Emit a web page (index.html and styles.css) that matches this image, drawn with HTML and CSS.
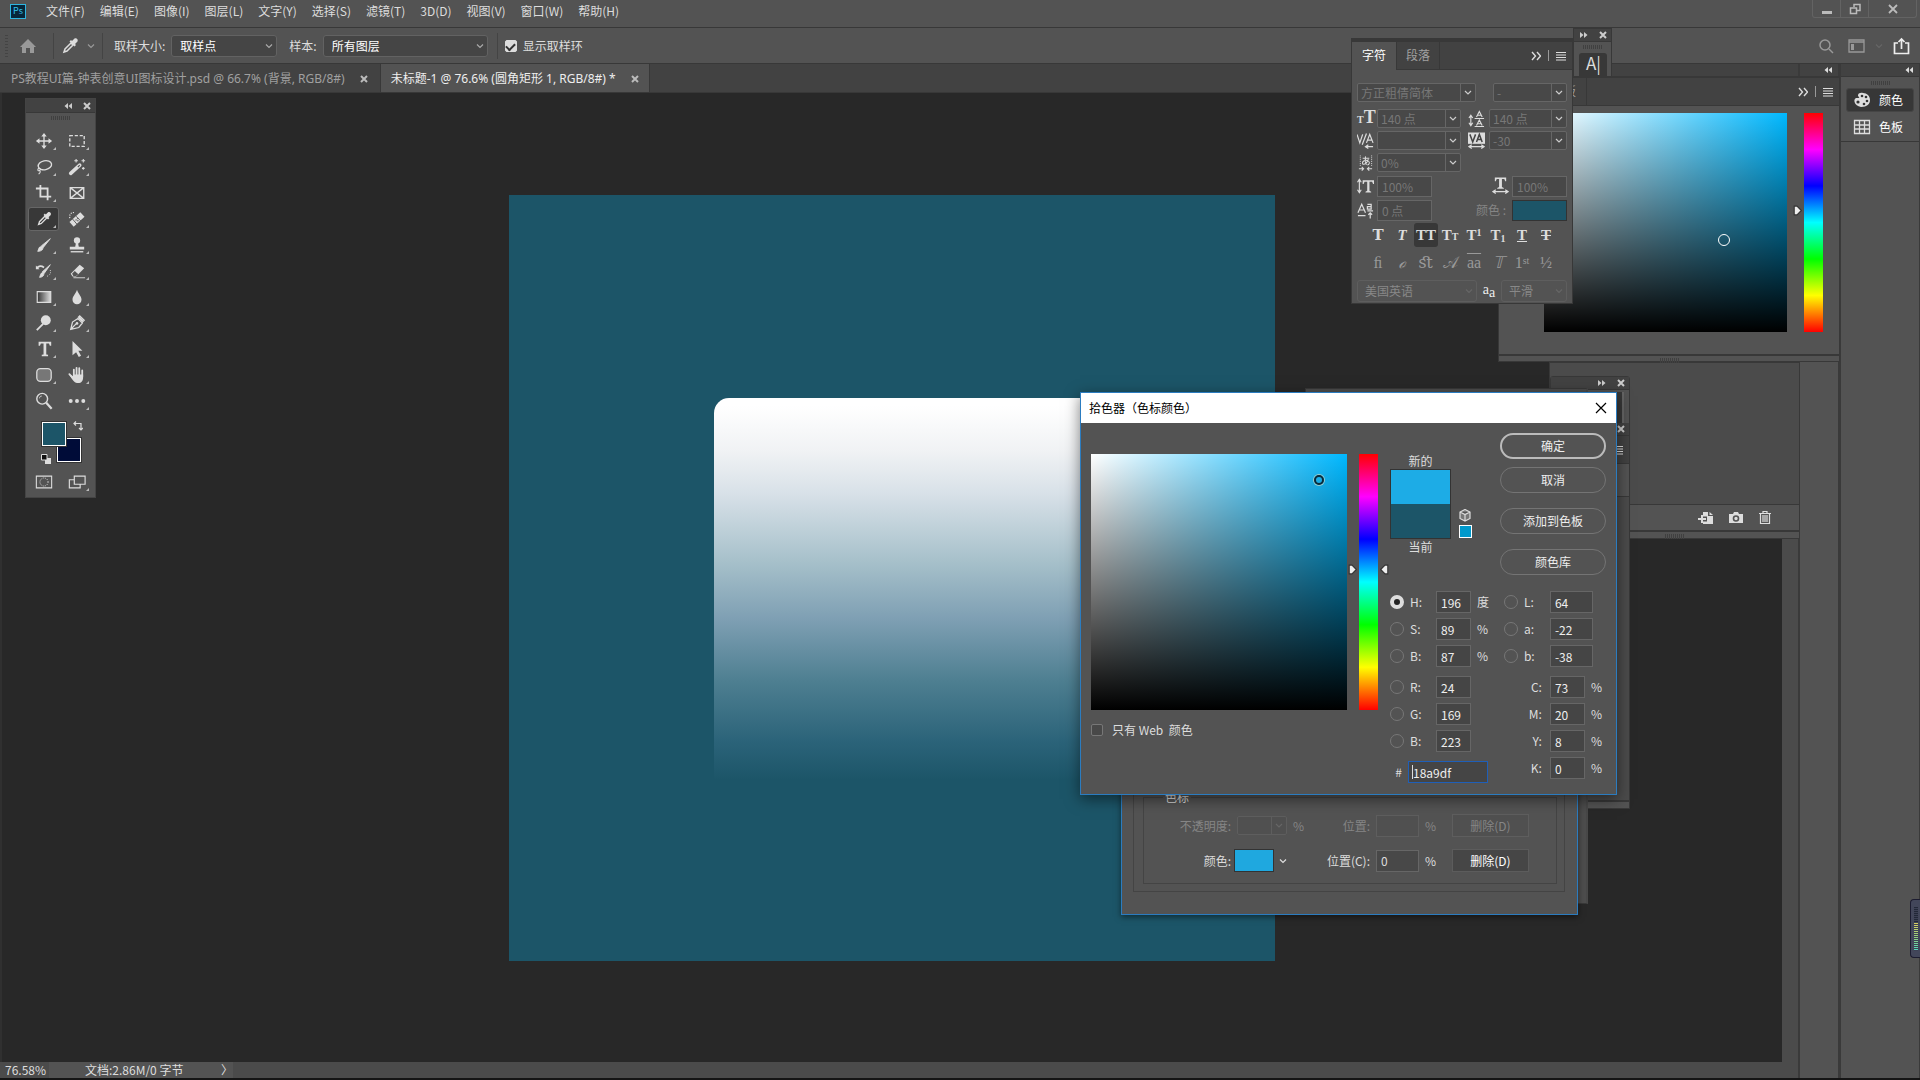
FILE: index.html
```html
<!DOCTYPE html>
<html lang="zh-CN">
<head>
    <meta charset="UTF-8">
    <meta name="viewport" content="width=device-width, initial-scale=1.0">
    <title>未标题-1</title>
    <link rel="stylesheet" href="styles.css">
</head>
<body>
    <!-- shared icons -->
    <svg class="sprite" aria-hidden="true">
        <symbol id="chevron" viewBox="0 0 8 8"><path d="M1 2.5l3 3 3-3" fill="none" stroke="currentColor" stroke-width="1.2"/></symbol>
        <symbol id="close" viewBox="0 0 8 8"><path d="M1 1l6 6M7 1L1 7" fill="none" stroke="currentColor" stroke-width="2"/></symbol>
        <symbol id="left2" viewBox="0 0 8 8"><path d="M4 1v6L0.500 4zM8 1v6L4.500 4z" fill="currentColor"/></symbol>
        <symbol id="right2" viewBox="0 0 8 8"><path d="M0 1v6l3.500-3zM4 1v6l3.500-3z" fill="currentColor"/></symbol>
        <symbol id="more" viewBox="0 0 10 10"><path d="M1 1l3.500 4L1 9M6 1l3.500 4L6 9" fill="none" stroke="currentColor" stroke-width="1.400"/></symbol>
        <symbol id="menu" viewBox="0 0 10 10"><path d="M0 1.500h10M0 4h10M0 6.500h10M0 9h10" fill="none" stroke="currentColor"/></symbol>
        <symbol id="dropper" viewBox="0 0 20 20"><path d="M4 16l1-3 6-6 2 2-6 6z" fill="none" stroke="currentColor" stroke-width="1.500"/><path d="M9.500 5.500L11 4l1 1 2.500-2.500c2-1 4 1 3 3L15 8l1 1-1.500 1.500z" fill="currentColor"/></symbol>
        <symbol id="pointer" viewBox="0 0 8 10"><path d="M1 1h2.500l4 4-4 4H1z" fill="#eee" stroke="#333"/></symbol>
    </svg>

    <div class="app">
        <header class="menubar">
            <span class="logo">Ps</span>
            <nav>
                <a href="#">文件(F)</a>
                <a href="#">编辑(E)</a>
                <a href="#">图像(I)</a>
                <a href="#">图层(L)</a>
                <a href="#">文字(Y)</a>
                <a href="#">选择(S)</a>
                <a href="#">滤镜(T)</a>
                <a href="#">3D(D)</a>
                <a href="#">视图(V)</a>
                <a href="#">窗口(W)</a>
                <a href="#">帮助(H)</a>
            </nav>
            <div class="win-buttons">
                <button aria-label="最小化"><svg width="12" height="12"><path d="M1 8h10v3H1z" fill="#bbb"/></svg></button>
                <button aria-label="还原"><svg width="12" height="12"><path d="M5 4V1.500h6v6H8M1.500 5h6v5.500h-6z" fill="none" stroke="#bbb" stroke-width="1.500"/></svg></button>
                <button aria-label="关闭" class="wide"><svg width="12" height="12"><path d="M2 2l8 8M10 2l-8 8" stroke="#bbb" stroke-width="1.800"/></svg></button>
            </div>
        </header>

        <div class="options">
            <span class="grip-v"></span>
            <button class="home" aria-label="主页"><svg width="18" height="16"><path d="M9 1l8 8h-2v6h-4v-5H7v5H3V9H1z" fill="#999"/></svg></button>
            <button class="tool-pick" aria-label="吸管工具"><svg width="20" height="20"><use href="#dropper"/></svg><svg width="8" height="8"><use href="#chevron"/></svg></button>
            <label for="sampleSize">取样大小:</label>
            <div class="select size">
                <select id="sampleSize"><option>取样点</option></select>
                <svg><use href="#chevron"/></svg>
            </div>
            <label for="sample">样本:</label>
            <div class="select layers">
                <select id="sample"><option>所有图层</option></select>
                <svg><use href="#chevron"/></svg>
            </div>
            <label class="ring"><input type="checkbox" class="check" checked>显示取样环</label>
            <div class="options-right">
                <svg width="16" height="16" class="search"><circle cx="7" cy="7" r="5" fill="none" stroke="#999" stroke-width="1.500"/><path d="M11 11l4 4" stroke="#999" stroke-width="1.500"/></svg>
                <svg width="17" height="14"><path d="M1 1h15v12H1zM1 3h15" fill="none" stroke="#999" stroke-width="1.300"/><path d="M3 5h3v6H3z" fill="#999"/></svg>
                <svg width="8" height="8" class="faint"><use href="#chevron"/></svg>
                <svg width="18" height="18"><path d="M5 6H1.500v10.500h14V6H12M8.500 12V2M5.500 5l3-3 3 3" fill="none" stroke="#eee" stroke-width="1.700"/></svg>
            </div>
        </div>

        <div class="work">
            <main>
                <div class="tabs">
                    <div class="tab"><a href="#">PS教程UI篇-钟表创意UI图标设计.psd @ 66.7% (背景, RGB/8#)</a><button aria-label="关闭"><svg width="8" height="8"><use href="#close"/></svg></button></div>
                    <div class="tab active"><a href="#">未标题-1 @ 76.6% (圆角矩形 1, RGB/8#) *</a><button aria-label="关闭"><svg width="8" height="8"><use href="#close"/></svg></button></div>
                </div>
                <div class="stage">
                    <div class="canvas"><div class="artboard"><div class="shape"></div></div></div>
                    <div class="scroll"></div>
                </div>
                <footer class="status">
                    <span class="zoom">76.58%</span>
                    <button class="doc"><span>文档:2.86M/0 字节</span><span>〉</span></button>
                </footer>
            </main>
            <aside class="strip">
                <div class="dock-head"><svg width="8" height="8"><use href="#left2"/></svg></div>
            </aside>
            <aside class="dock">
                <div class="dock-head"><svg width="8" height="8"><use href="#left2"/></svg></div>
                <div class="dock-group">
                    <span class="grip"></span>
                    <button class="on"><svg width="18" height="16"><path d="M10 1C5 0 4 4 6 5c1 1-1 1-3 1-3 1-2 8 5 9 6 0 9-3 9-7 0-4-3-7-7-7z" fill="#ddd"/><g fill="#333"><circle cx="9" cy="4" r="1.300"/><circle cx="13" cy="5" r="1.300"/><circle cx="14" cy="9" r="1.300"/><circle cx="11" cy="12" r="1.300"/><circle cx="5" cy="10" r="1.600"/></g></svg>颜色</button>
                    <button><svg width="18" height="16"><path d="M1.500 1.500h15v13h-15zM1.500 6h15M1.500 10h15M6.500 1v13M11.500 1v13" fill="none" stroke="#ddd" stroke-width="1.300"/></svg>色板</button>
                </div>
            </aside>
        </div>
        <div class="taskbar"></div>

        <!-- history panel -->
        <section class="float history">
            <div class="list"></div>
            <div class="foot">
                <button aria-label="新建文档"><svg width="15" height="12"><path d="M5 0h5v4h5v8H5V9.500h4v-5H5z" fill="#ddd"/><path d="M11.500 0L15 3h-3.500z" fill="#ddd"/><path d="M0 7h8M4 3v8" stroke="#ddd" stroke-width="2"/></svg></button>
                <button aria-label="新建快照"><svg width="14" height="12"><path d="M0 2h4l1-2h4l1 2h4v9H0z" fill="#ddd"/><circle cx="7" cy="6.500" r="2.500" fill="none" stroke="#535353" stroke-width="1.600"/></svg></button>
                <button aria-label="删除"><svg width="12" height="13"><path d="M0 2.500h12M4 2V.5h4V2M1.500 3v9.500h9V3M4 4v7M6 4v7M8 4v7" fill="none" stroke="#ddd" stroke-width="1.200"/></svg></button>
            </div>
            <div class="drag"><span class="grip"></span></div>
        </section>

        <!-- icon strips and windows left open behind the dialogs -->
        <section class="float small-top">
            <div class="float-head"><svg width="8" height="8"><use href="#right2"/></svg><svg width="8" height="8"><use href="#close"/></svg></div>
            <span class="grip"></span>
            <button class="a-button">A|</button>
        </section>
        <section class="float props">
            <div class="float-head"><svg width="8" height="8"><use href="#right2"/></svg><svg width="8" height="8"><use href="#close"/></svg></div>
            <div class="icon-row"></div>
            <div class="float-head"><svg width="8" height="8"><use href="#close"/></svg></div>
            <div class="props-tabs"><svg width="10" height="10"><use href="#menu"/></svg></div>
            <div class="props-bar"></div>
            <div class="props-body"></div>
        </section>
        <section class="float style-window"></section>

        <!-- color panel -->
        <section class="float color-panel">
            <div class="panel-tabs">
                <a href="#">色板</a>
                <div class="panel-tools"><svg width="10" height="10"><use href="#more"/></svg><i></i><svg width="10" height="10"><use href="#menu"/></svg></div>
            </div>
            <div class="color-body">
                <div class="field"><span class="marker"></span></div>
                <div class="hue-wrap">
                    <svg class="pointer"><use href="#pointer"/></svg>
                    <input type="range" class="hue" min="0" max="360" value="196" aria-label="色相">
                </div>
            </div>
            <div class="drag"><span class="grip"></span></div>
        </section>

        <!-- character panel -->
        <section class="float char-panel">
            <div class="panel-tabs">
                <a href="#" class="active">字符</a>
                <a href="#">段落</a>
                <div class="panel-tools"><svg width="10" height="10"><use href="#more"/></svg><i></i><svg width="10" height="10"><use href="#menu"/></svg></div>
            </div>
            <div class="char-body">
                <div class="char-row first">
                    <div class="combo font"><select aria-label="字体"><option>方正粗倩简体</option></select><svg><use href="#chevron"/></svg></div>
                    <div class="combo weight"><select aria-label="字体样式"><option>-</option></select><svg><use href="#chevron"/></svg></div>
                </div>
                <div class="char-row">
                    <span class="glyph"><small>T</small><b>T</b></span>
                    <div class="combo"><select aria-label="字体大小"><option>140 点</option></select><svg><use href="#chevron"/></svg></div>
                    <svg class="char-icon" viewBox="0 0 18 18"><path d="M3 6v9M1 8l2-3 2 3M1 13l2 3 2-3M7 8.500h10M7 17h10M9 7l3-6 3 6M10 5h4M9 16l3-6 3 6M10 14h4" fill="none" stroke="#ddd" stroke-width="1.200"/></svg>
                    <div class="combo right"><select aria-label="行距"><option>140 点</option></select><svg><use href="#chevron"/></svg></div>
                </div>
                <div class="char-row">
                    <svg class="char-icon" viewBox="0 0 18 18"><path d="M0 2l3 9 3-9M5.500 13L10 1M10 11l3.500-9 3.500 9M11 8h5M9 15h8M12 13l-3 2 3 2" fill="none" stroke="#ddd" stroke-width="1.300"/></svg>
                    <div class="combo"><select aria-label="字距微调"><option></option></select><svg><use href="#chevron"/></svg></div>
                    <svg class="char-icon" viewBox="0 0 18 18"><path d="M0 0h18v12H0z" fill="#ddd"/><path d="M2 2l3 8 3-8M9 10l3-8 3 8M10 7.500h4" fill="none" stroke="#444" stroke-width="1.600"/><path d="M1 15h16M4 13l-3 2 3 2M14 13l3 2-3 2" fill="none" stroke="#ddd" stroke-width="1.300"/></svg>
                    <div class="combo right"><select aria-label="字距"><option>-30</option></select><svg><use href="#chevron"/></svg></div>
                </div>
                <div class="char-row">
                    <svg class="char-icon" viewBox="0 0 18 18"><path d="M3.500 1v12M15.500 1v12" stroke="#ddd" stroke-dasharray="1 1"/><path d="M6 4h7M9 2c-1 4 0 7 1 9M12 5c-1 4-4 6-6 5-1-3 3-5 6-3 2 1 1 4-1 4M2 15h5M16 15h-5M5 13l2 2-2 2M13 13l-2 2 2 2" fill="none" stroke="#ddd" stroke-width="1.100"/></svg>
                    <div class="combo"><select aria-label="比例间距"><option>0%</option></select><svg><use href="#chevron"/></svg></div>
                </div>
                <div class="char-row tall">
                    <svg class="char-icon" viewBox="0 0 18 18"><path d="M2.500 3v12M.5 5l2-3 2 3M.5 13l2 3 2-3" fill="none" stroke="#ddd" stroke-width="1.200"/><path d="M6 3h12v4h-1l-1-2.500h-2.800v9.500l1.800 1v1H9v-1l1.800-1V4.500H8L7 7H6z" fill="#ddd"/></svg>
                    <input type="text" class="box" value="100%" aria-label="垂直缩放">
                    <svg class="char-icon push" viewBox="0 0 18 18"><path d="M3 0h12v4h-1l-1-2.500h-2.500v8.500l2 1v1H5.500v-1l2-1V1.500H5L4 4H3z" fill="#ddd"/><path d="M1 15h16M4 13l-3 2 3 2M14 13l3 2-3 2" fill="none" stroke="#ddd" stroke-width="1.300"/></svg>
                    <input type="text" class="box" value="100%" aria-label="水平缩放">
                </div>
                <div class="char-row tall">
                    <svg class="char-icon" viewBox="0 0 18 18"><path d="M1 12l4-9 4 9M3 9h5M1 15h8M11 3h4v5h-4V5.500h4M11 10h6M14 12v6M12 14l2-2 2 2" fill="none" stroke="#ddd" stroke-width="1.300"/></svg>
                    <input type="text" class="box" value="0 点" aria-label="基线偏移">
                    <span class="color-label">颜色 :</span>
                    <button class="box teal" aria-label="文本颜色"></button>
                </div>
                <div class="type-row">
                    <button><b>T</b></button>
                    <button><em>T</em></button>
                    <button class="on">TT</button>
                    <button>T<small>T</small></button>
                    <button>T<sup>1</sup></button>
                    <button>T<sub>1</sub></button>
                    <button><u>T</u></button>
                    <button><s>T</s></button>
                </div>
                <div class="type-row dim">
                    <button>ﬁ</button>
                    <button><em>ℴ</em></button>
                    <button>ﬆ</button>
                    <button>𝒜</button>
                    <button><span class="over">aa</span></button>
                    <button><em>𝕋</em></button>
                    <button>1<sup>st</sup></button>
                    <button>½</button>
                </div>
                <div class="char-row last">
                    <div class="select lang"><select aria-label="语言"><option>美国英语</option></select><svg><use href="#chevron"/></svg></div>
                    <span class="aa">a<sub>a</sub></span>
                    <div class="select smooth"><select aria-label="消除锯齿"><option>平滑</option></select><svg><use href="#chevron"/></svg></div>
                </div>
            </div>
        </section>

        <!-- toolbox -->
        <section class="float toolbox">
            <div class="float-head"><svg width="8" height="8"><use href="#left2"/></svg><svg width="8" height="8"><use href="#close"/></svg></div>
            <span class="grip"></span>
            <div class="tools">
                <button class="sub" aria-label="移动"><svg viewBox="0 0 20 20"><path d="M10 3v14M3 10h14" stroke="currentColor" stroke-width="1.500"/><path d="M10 1l3 4H7zM10 19l3-4H7zM1 10l4-3v6zM19 10l-4-3v6z" fill="currentColor"/></svg></button>
                <button class="sub" aria-label="矩形选框"><svg viewBox="0 0 20 20"><path d="M2 4h16v12H2z" fill="none" stroke="currentColor" stroke-width="1.500" stroke-dasharray="3.500 2"/></svg></button>
                <button class="sub" aria-label="套索"><svg viewBox="0 0 20 20"><ellipse cx="11" cy="8" rx="7.500" ry="5" transform="rotate(-12 11 8)" fill="none" stroke="currentColor" stroke-width="1.500"/><path d="M5 11c-3 1-2 4 0 3s1-3-1-2M5 14c2 1 0 3-1 4" fill="none" stroke="currentColor" stroke-width="1.200"/></svg></button>
                <button class="sub" aria-label="魔棒"><svg viewBox="0 0 20 20"><path d="M3 17l10-9" stroke="currentColor" stroke-width="4" stroke-linecap="round"/><path d="M9 1v4M7 3h4M17 1v4M15 3h4M17 10v3M15.500 11.500h3" stroke="currentColor" stroke-width="1.200"/><path d="M11 10l2-2" stroke="#535353" stroke-width="1.200"/></svg></button>
                <button class="sub" aria-label="裁剪"><svg viewBox="0 0 20 20"><path d="M1 5h13v13M6 1v13h12" fill="none" stroke="currentColor" stroke-width="2"/></svg></button>
                <button aria-label="图框"><svg viewBox="0 0 20 20"><path d="M2.500 4h15v12h-15zM2.500 4l15 12M17.500 4l-15 12" fill="none" stroke="currentColor" stroke-width="1.500"/></svg></button>
                <button class="sub on" aria-label="吸管"><svg><use href="#dropper"/></svg></button>
                <button class="sub" aria-label="修复画笔"><svg viewBox="0 0 20 20"><path d="M4 16L16 5" stroke="currentColor" stroke-width="7"/><path d="M5 10l6 7M9 7l6 6" stroke="#535353"/><g fill="#535353"><circle cx="9" cy="11" r=".8"/><circle cx="11" cy="9.500" r=".8"/><circle cx="11" cy="12" r=".8"/></g><path d="M2 9c-1-4 2-7 6-6" fill="none" stroke="currentColor" stroke-width="1.300" stroke-dasharray="1.300 1.300"/></svg></button>
                <button class="sub" aria-label="画笔"><svg viewBox="0 0 20 20"><path d="M17 3l-8 10-2-2zM8 12c2 2 0 5-5 5 1-1 1-5 3-5z" fill="currentColor" stroke="currentColor"/></svg></button>
                <button class="sub" aria-label="仿制图章"><svg viewBox="0 0 20 20"><circle cx="10" cy="5" r="3.500" fill="currentColor"/><path d="M9 7h2l1 5h6v3H2v-3h6z" fill="currentColor"/><path d="M3 17.500h14" stroke="currentColor" stroke-width="1.500"/></svg></button>
                <button class="sub" aria-label="历史记录画笔"><svg viewBox="0 0 20 20"><path d="M17 3l-7 10-2-2zM9 12c2 2 0 5-4 5 1-1 1-5 3-5z" fill="currentColor" stroke="currentColor"/><path d="M2 7c2-3 5-3 8-1" fill="none" stroke="currentColor" stroke-width="2"/><path d="M1 4v4h4z" fill="currentColor"/><path d="M17 9c1 4-1 6-4 7" fill="none" stroke="currentColor" stroke-dasharray="1 1.500"/></svg></button>
                <button class="sub" aria-label="橡皮擦"><svg viewBox="0 0 20 20"><path d="M3 13L13 3l5 4-9 9H5z" fill="currentColor"/><path d="M4.500 13l3-3 4 3.500-2.500 2H6z" fill="#535353"/><path d="M6 17.500h13" stroke="currentColor"/></svg></button>
                <button class="sub" aria-label="渐变"><svg viewBox="0 0 20 20"><defs><linearGradient id="fade"><stop stop-color="#333"/><stop offset="1" stop-color="#ddd"/></linearGradient></defs><path d="M2.500 4h15v12h-15z" fill="url(#fade)" stroke="currentColor" stroke-width="1.300"/></svg></button>
                <button class="sub" aria-label="模糊"><svg viewBox="0 0 20 20"><path d="M10 2c1 4 5 7 5 11a5 5 0 0 1-10 0c0-4 4-7 5-11z" fill="currentColor"/></svg></button>
                <button class="sub" aria-label="减淡"><svg viewBox="0 0 20 20"><circle cx="12" cy="7" r="5.500" fill="currentColor"/><path d="M9 11l-7 7" stroke="currentColor" stroke-width="2"/></svg></button>
                <button class="sub" aria-label="钢笔"><svg viewBox="0 0 20 20"><path d="M3 17l2-8 6-4 5 5-4 5zM3 17l6-6M11 4l2-2 5 5-2 2" fill="none" stroke="currentColor" stroke-width="1.400"/><circle cx="10" cy="10.500" r="1.500" fill="currentColor"/><path d="M12 3.500l4.500 4.500" stroke="currentColor" stroke-width="2.500"/></svg></button>
                <button class="sub" aria-label="文字"><svg viewBox="0 0 20 20"><path d="M4 2h14v4.500h-1.500L15.500 4H12.500v12l2 .5V18h-7v-1.500l2-.5V4h-3L5.500 6.500H4z" fill="currentColor"/></svg></button>
                <button class="sub" aria-label="路径选择"><svg viewBox="0 0 20 20"><path d="M5 1l11 11h-4.500l3 5.500-2.500 1.500-3-5.500L5 17z" fill="currentColor"/></svg></button>
                <button class="sub" aria-label="圆角矩形"><svg viewBox="0 0 20 20"><rect x="2" y="3" width="16" height="14" rx="4" fill="#777" stroke="currentColor" stroke-width="1.400"/></svg></button>
                <button class="sub" aria-label="抓手"><svg viewBox="0 0 20 20"><path d="M6.500 12V4M9.500 11V2M12.500 11V2.500M15.800 12V5M5 13l-3.500-4" stroke="currentColor" stroke-width="2" stroke-linecap="round"/><path d="M5.500 9.500h11.300v3c0 4-2 6.500-5.300 6.500-4 0-5.500-2-9.500-8.500 1-1 2 0 3.500 1z" fill="currentColor"/></svg></button>
                <button aria-label="缩放"><svg viewBox="0 0 20 20"><circle cx="8" cy="7.500" r="6" fill="none" stroke="currentColor" stroke-width="1.600"/><path d="M12.500 12l6 6.500" stroke="currentColor" stroke-width="2.500"/><path d="M5 7c0-1.500 1-2.500 2.500-2.500" fill="none" stroke="currentColor"/></svg></button>
                <button class="sub" aria-label="编辑工具栏"><svg viewBox="0 0 20 20"><g fill="currentColor"><circle cx="3" cy="10" r="2.200"/><circle cx="10" cy="10" r="2.200"/><circle cx="17" cy="10" r="2.200"/></g></svg></button>
            </div>
            <div class="swatches">
                <button class="bg" aria-label="背景色"></button>
                <button class="fg" aria-label="前景色"></button>
                <svg class="swap" viewBox="0 0 10 10"><path d="M1 2.500h7V9M3 0.500l-2 2 2 2M6 7l2 2 2-2" fill="none" stroke="#ddd" stroke-width="1.200"/></svg>
                <svg class="default" viewBox="0 0 10 10"><path d="M4 4h6v6H4z" fill="#ddd"/><path d="M.5.5h5.500v5.500H.5z" fill="#111" stroke="#ddd"/></svg>
            </div>
            <div class="tools">
                <button aria-label="快速蒙版"><svg viewBox="0 0 20 20"><path d="M1.500 3.500h17v13h-17z" fill="none" stroke="currentColor" stroke-width="1.200"/><circle cx="10" cy="10" r="4.500" fill="none" stroke="currentColor" stroke-dasharray="1.200 1.200"/></svg></button>
                <button class="sub" aria-label="屏幕模式"><svg viewBox="0 0 20 20"><path d="M7 3.500h12v9H7zM7 7.500H1.500v9h12v-4" fill="none" stroke="currentColor" stroke-width="1.300"/></svg></button>
            </div>
        </section>

        <!-- gradient editor -->
        <section class="float editor">
            <div class="editor-frame">
                <fieldset>
                    <legend>色标</legend>
                    <div class="stops">
                        <label class="off" for="opacity">不透明度:</label>
                        <div class="combo off"><input type="text" id="opacity" disabled><svg><use href="#chevron"/></svg></div>
                        <span class="off">%</span>
                        <label class="off" for="pos1">位置:</label>
                        <input type="text" id="pos1" class="off" disabled>
                        <span class="off">%</span>
                        <button class="off" disabled>删除(D)</button>

                        <label for="stopColor">颜色:</label>
                        <div class="stop-color"><button id="stopColor" aria-label="颜色"></button><svg width="8" height="8"><use href="#chevron"/></svg></div>
                        <span></span>
                        <label for="pos2">位置(C):</label>
                        <input type="text" id="pos2" value="0">
                        <span>%</span>
                        <button>删除(D)</button>
                    </div>
                </fieldset>
            </div>
        </section>

        <!-- color picker -->
        <section class="float picker">
            <header>
                <h1>拾色器（色标颜色）</h1>
                <button aria-label="关闭"><svg width="12" height="12"><path d="M1 1l10 10M11 1L1 11" stroke="#000" stroke-width="1.200"/></svg></button>
            </header>
            <div class="picker-body">
                <div class="picker-left">
                    <div class="field"><span class="marker dark"></span></div>
                    <label class="web"><input type="checkbox" class="check">只有 Web&nbsp; 颜色</label>
                </div>
                <div class="hue-wrap">
                    <svg class="pointer"><use href="#pointer"/></svg>
                    <input type="range" class="hue" min="0" max="360" value="196" aria-label="色相">
                    <svg class="pointer flip"><use href="#pointer"/></svg>
                </div>
                <div class="picker-right">
                    <div class="picker-top">
                        <div class="compare">
                            <span>新的</span>
                            <div class="chips"><i></i><i></i></div>
                            <span>当前</span>
                        </div>
                        <div class="websafe">
                            <svg width="12" height="13"><path d="M6 .5l5 2.500v6.500L6 12 1 9.500V3zM1 3l5 2.500L11 3M6 5.500V12" fill="#777" stroke="#ddd" stroke-width="1.200"/></svg>
                            <button aria-label="Web 安全颜色"></button>
                        </div>
                        <div class="actions">
                            <button class="primary">确定</button>
                            <button>取消</button>
                            <button class="spaced">添加到色板</button>
                            <button class="spaced">颜色库</button>
                        </div>
                    </div>
                    <div class="values">
                        <div class="group">
                            <div class="row"><input type="radio" name="mode" id="mH" checked><label for="mH">H:</label><input type="text" value="196" aria-label="H"><span>度</span></div>
                            <div class="row"><input type="radio" name="mode" id="mS"><label for="mS">S:</label><input type="text" value="89" aria-label="S"><span>%</span></div>
                            <div class="row"><input type="radio" name="mode" id="mB"><label for="mB">B:</label><input type="text" value="87" aria-label="B"><span>%</span></div>
                            <div class="row split"><input type="radio" name="mode" id="mR"><label for="mR">R:</label><input type="text" value="24" aria-label="R"></div>
                            <div class="row"><input type="radio" name="mode" id="mG"><label for="mG">G:</label><input type="text" value="169" aria-label="G"></div>
                            <div class="row"><input type="radio" name="mode" id="mBl"><label for="mBl">B:</label><input type="text" value="223" aria-label="B"></div>
                            <div class="row split hex"><label for="hex">#</label><input type="text" id="hex" value="18a9df"></div>
                        </div>
                        <div class="group">
                            <div class="row lab"><input type="radio" name="mode" id="mL"><label for="mL">L:</label><input type="text" value="64" aria-label="L"></div>
                            <div class="row lab"><input type="radio" name="mode" id="mA"><label for="mA">a:</label><input type="text" value="-22" aria-label="a"></div>
                            <div class="row lab"><input type="radio" name="mode" id="mLb"><label for="mLb">b:</label><input type="text" value="-38" aria-label="b"></div>
                            <div class="row split cmyk"><label for="cC">C:</label><input type="text" id="cC" value="73"><span>%</span></div>
                            <div class="row cmyk"><label for="cM">M:</label><input type="text" id="cM" value="20"><span>%</span></div>
                            <div class="row cmyk"><label for="cY">Y:</label><input type="text" id="cY" value="8"><span>%</span></div>
                            <div class="row cmyk"><label for="cK">K:</label><input type="text" id="cK" value="0"><span>%</span></div>
                        </div>
                    </div>
                </div>
            </div>
        </section>

        <div class="meter"><i></i></div>
    </div>
</body>
</html>
```
FILE: styles.css
```css
* {
    box-sizing: border-box;
}

body {
    margin: 0;
    font-family: "Noto Sans CJK SC", "Noto Sans", sans-serif;
    font-size: 12px;
    line-height: 16px;
    color: #ddd;
    background: #282828;
}

button, input, select {
    font: inherit;
    color: inherit;
    background: none;
    border: 0;
    margin: 0;
    padding: 0;
}

a {
    color: inherit;
    text-decoration: none;
    white-space: nowrap;
}

svg {
    display: block;
    flex: none;
}

.sprite {
    position: absolute;
    width: 0;
    height: 0;
}

.app {
    position: relative;
    display: flex;
    flex-direction: column;
    height: 100vh;
    overflow: hidden;
}

/* top bars */
.menubar {
    display: flex;
    align-items: center;
    height: 28px;
    padding-left: 10px;
    padding-bottom: 5px;
    background: #535353;
    border-bottom: 1px solid #383838;
}

.logo {
    width: 16px;
    height: 15px;
    margin-right: 20px;
    border: 1px solid #2fb5e0;
    background: #06263a;
    color: #35c3ee;
    font-size: 9px;
    line-height: 12px;
    text-align: center;
}

.menubar nav {
    display: flex;
    gap: 15px;
    flex: 1;
}

.win-buttons {
    display: flex;
    align-self: flex-start;
    height: 18px;
    margin-right: 3px;
    border: 1px solid #636363;
    border-top: 0;
    border-radius: 0 0 3px 3px;
}

.win-buttons button {
    display: flex;
    align-items: center;
    justify-content: center;
    width: 28px;
    border-right: 1px solid #636363;
}

.win-buttons .wide {
    width: 47px;
    border: 0;
}

.options {
    display: flex;
    align-items: center;
    height: 36px;
    padding-left: 5px;
    background: #535353;
    border-bottom: 1px solid #383838;
}

.grip-v {
    width: 3px;
    height: 22px;
    background: repeating-linear-gradient(#444 0 1px, transparent 1px 3px);
}

.home {
    width: 46px;
    height: 26px;
    padding-left: 11px;
    border-right: 1px solid #444;
}

.tool-pick {
    display: flex;
    align-items: center;
    gap: 7px;
    width: 49px;
    height: 26px;
    margin-right: 11px;
    padding-left: 6px;
    border-right: 1px solid #444;
}

.tool-pick svg + svg {
    color: #999;
}

.select {
    display: grid;
    align-items: center;
    height: 22px;
    margin: 0 12px 0 6px;
    border: 1px solid #626262;
    border-radius: 3px;
    background: #454545;
}

.select select, .select svg {
    grid-area: 1 / 1;
}

.select select {
    appearance: none;
    width: 100%;
    padding-left: 8px;
    color: #fff;
}

.select svg {
    justify-self: end;
    width: 8px;
    height: 8px;
    margin-right: 3px;
    color: #aaa;
    pointer-events: none;
}

.size {
    width: 106px;
}

.layers {
    width: 165px;
    margin-right: 9px;
}

.ring {
    display: flex;
    align-items: center;
    gap: 6px;
    height: 26px;
    padding-left: 7px;
    border-left: 1px solid #444;
}

.check {
    appearance: none;
    width: 12px;
    height: 12px;
    border: 1px solid #777;
    border-radius: 2px;
    background: #484848;
}

.check:checked {
    display: grid;
    place-items: center;
    border-color: #ddd;
    background: #ddd;
}

.check:checked::after {
    content: "";
    width: 7px;
    height: 4px;
    border: solid #333;
    border-width: 0 0 2px 2px;
    transform: rotate(-45deg);
}

.options-right {
    display: flex;
    align-items: center;
    gap: 10px;
    margin-left: auto;
    padding-right: 9px;
}

.search {
    margin-right: 4px;
}

.faint {
    color: #666;
}

/* work area */
.work {
    display: flex;
    flex: 1;
    min-height: 0;
}

main {
    display: flex;
    flex-direction: column;
    flex: 1;
    min-width: 0;
    border-right: 2px solid #3a3a3a;
}

.tabs {
    display: flex;
    height: 29px;
    background: #424242;
    border-bottom: 1px solid #383838;
    font-family: "Noto Sans", "Noto Sans CJK SC", sans-serif;
}

.tab {
    display: flex;
    align-items: center;
    gap: 15px;
    padding: 1px 12px 0 11px;
    border-right: 1px solid #383838;
    color: #a0a0a0;
}

.tab.active {
    padding: 1px 10px 0;
    background: #535353;
    color: #eee;
}

.tab button {
    color: #bbb;
}

.stage {
    display: flex;
    flex: 1;
    min-height: 0;
}

.canvas {
    display: flex;
    align-items: center;
    justify-content: center;
    flex: 1;
    overflow: hidden;
    border-left: 2px solid #303030;
}

.artboard {
    flex: none;
    width: 766px;
    height: 766px;
    padding: 203px 0 0 205px;
    background: #1c5568;
}

.shape {
    width: 420px;
    height: 382px;
    border-radius: 15px 15px 0 0;
    background: linear-gradient(#fff 2%, #f0f2f4 14%, #d8e1e8 25%, #a6c0ca 43%, #7e9fb3 58%, #4e7f91 74%, #2b6379 90%, #1c5568);
}

.scroll {
    width: 16px;
    background: #4b4b4b;
}

.status {
    display: flex;
    height: 16px;
    background: #4b4b4b;
}

.zoom {
    width: 49px;
    padding-left: 5px;
}

.doc {
    display: flex;
    justify-content: space-between;
    width: 184px;
    padding-left: 36px;
    background: #535353;
}

.taskbar {
    height: 2px;
    background: #151515;
}

.strip {
    width: 41px;
    background: #535353;
    border-right: 3px solid #3a3a3a;
}

.dock {
    width: 79px;
    background: #535353;
    border-right: 1px solid #3a3a3a;
}

.dock-head {
    display: flex;
    align-items: center;
    justify-content: flex-end;
    height: 12px;
    padding-right: 6px;
    background: #424242;
}

.dock-group {
    padding: 4px 5px 2px;
    border-top: 1px solid #383838;
    border-bottom: 1px solid #383838;
}

.grip {
    display: block;
    width: 19px;
    height: 4px;
    margin: 0 auto;
    background: repeating-linear-gradient(90deg, #404040 0 1px, transparent 1px 2px);
}

.dock-group button {
    display: flex;
    align-items: center;
    gap: 8px;
    width: 100%;
    height: 24px;
    margin-top: 3px;
    padding-left: 6px;
    border: 1px solid transparent;
    border-radius: 3px;
    color: #fff;
}

.dock-group .on {
    border-color: #454545;
    background: #373737;
}

/* floating windows */
.float {
    position: absolute;
    background: #535353;
    border: 1px solid #383838;
}

.float-head {
    display: flex;
    align-items: center;
    justify-content: flex-end;
    gap: 11px;
    height: 13px;
    padding-right: 4px;
    background: #424242;
    border-bottom: 1px solid #383838;
    color: #ccc;
}

.drag {
    height: 8px;
    padding-top: 2px;
    border-top: 2px solid #383838;
}

.drag .grip {
    height: 5px;
}

.panel-tabs {
    display: flex;
    height: 28px;
    background: #424242;
    border-bottom: 1px solid #383838;
    line-height: 26px;
}

.panel-tabs a {
    padding: 0 9px;
    border-right: 1px solid #383838;
    color: #a0a0a0;
}

.panel-tabs .active {
    padding: 0 10px;
    background: #535353;
    height: 28px;
    color: #fff;
}

.panel-tools {
    display: flex;
    align-items: center;
    gap: 7px;
    margin-left: auto;
    padding-right: 6px;
}

.panel-tools i {
    width: 1px;
    height: 11px;
    background: #999;
}

.history {
    top: 362px;
    right: 120px;
    width: 251px;
    height: 177px;
    display: flex;
    flex-direction: column;
}

.history .list {
    flex: 1;
    background: #4b4b4b;
    border-bottom: 1px solid #383838;
}

.history .foot {
    display: flex;
    align-items: center;
    justify-content: flex-end;
    gap: 16px;
    height: 25px;
    padding-right: 28px;
}

.small-top {
    top: 28px;
    left: 1573px;
    width: 39px;
    height: 50px;
}

.small-top .grip {
    margin-top: 3px;
}

.a-button {
    display: block;
    width: 28px;
    height: 24px;
    margin: 4px auto 0;
    border-radius: 3px 3px 0 0;
    background: #383838;
    font-size: 17px;
    line-height: 20px;
    padding: 0 0 4px 2px;
}

.props {
    top: 376px;
    left: 1550px;
    width: 80px;
    height: 433px;
    display: flex;
    flex-direction: column;
    border-radius: 3px 3px 0 0;
}

.icon-row {
    height: 31px;
    margin: 2px 5px 0 0;
    border-right: 2px solid #666;
    background: #383838;
}

.props-tabs {
    display: flex;
    align-items: center;
    justify-content: flex-end;
    height: 28px;
    padding-right: 6px;
    background: #424242;
    border-bottom: 1px solid #383838;
}

.props-bar {
    height: 33px;
    border-bottom: 1px solid #383838;
}

.props-body {
    flex: 1;
    margin-bottom: 6px;
    background: #4b4b4b;
    border-bottom: 2px solid #383838;
}

.style-window {
    top: 388px;
    left: 1305px;
    width: 283px;
    height: 516px;
    background: #4d4d4d;
    border-right: 2px solid #484848;
}

.color-panel {
    top: 76px;
    left: 1498px;
    width: 342px;
    height: 286px;
    border-top-width: 2px;
}

.color-panel .panel-tabs a {
    padding: 0 10px 0 53px;
}

.color-body {
    display: flex;
    gap: 17px;
    height: 248px;
    padding: 7px 16px 0 45px;
}

.field {
    position: relative;
    height: 256px;
    background: linear-gradient(to top, #000, transparent), linear-gradient(to right, #fff, #00b8ff);
}

.color-body .field {
    flex: 1;
    height: 219px;
}

.marker {
    position: absolute;
    left: 74%;
    top: 58%;
    width: 12px;
    height: 12px;
    transform: translate(-50%, -50%);
    border: 1px solid #fff;
    border-radius: 50%;
}

.marker.dark {
    left: 89%;
    top: 10%;
    width: 10px;
    height: 10px;
    border: 2px solid #0a2a3a;
    box-shadow: 0 0 0 1px #9cc;
}

.hue-wrap {
    position: relative;
    flex: none;
    width: 19px;
    height: 219px;
}

.hue {
    display: block;
    appearance: none;
    writing-mode: vertical-lr;
    direction: rtl;
    width: 100%;
    height: 100%;
    background: linear-gradient(#f00, #f0f 16.7%, #00f 33.3%, #0ff 50%, #0f0 66.7%, #ff0 83.3%, #f00);
}

.hue::-webkit-slider-thumb {
    appearance: none;
    width: 1px;
    height: 1px;
}

.pointer {
    position: absolute;
    top: 43%;
    left: -11px;
    width: 9px;
    height: 11px;
}

.color-body .pointer {
    top: 42%;
}

.pointer.flip {
    left: auto;
    right: -11px;
    transform: scaleX(-1);
}

/* character panel */
.char-panel {
    top: 38px;
    left: 1351px;
    width: 222px;
    border-top-width: 4px;
}

.char-body {
    padding: 13px 5px 1px;
    color: #858585;
}

.char-row {
    display: flex;
    align-items: center;
    height: 19px;
    margin-bottom: 3px;
}

.char-row.first {
    justify-content: space-between;
    margin-bottom: 7px;
}

.char-row.tall {
    height: 22px;
    margin-bottom: 2px;
}

.char-icon {
    width: 17px;
    height: 18px;
    margin-right: 3px;
}

.glyph {
    width: 20px;
    font-family: "Liberation Serif", serif;
    color: #ddd;
    white-space: nowrap;
}

.glyph small {
    font-size: 10px;
    font-weight: bold;
}

.glyph b {
    font-size: 18px;
}

.combo {
    display: flex;
    align-items: center;
    width: 84px;
    height: 19px;
    border: 1px solid #666;
    border-radius: 2px;
    background: #484848;
}

.combo select, .combo input {
    appearance: none;
    flex: 1;
    min-width: 0;
    padding-left: 3px;
    color: #777;
}

.combo svg {
    width: 15px;
    height: 17px;
    padding: 4px 3px;
    border-left: 1px solid #666;
    color: #ccc;
}

.char-row .combo + .char-icon {
    margin-left: 7px;
}

.combo.font {
    width: 119px;
}

.combo.weight {
    width: 74px;
}

.combo.right {
    width: 78px;
    margin-left: auto;
}

.box {
    width: 55px;
    height: 21px;
    padding-left: 4px;
    border: 1px solid #666;
    background: #484848;
    color: #777;
}

.char-row .char-icon.push {
    margin-left: auto;
}

.color-label {
    margin-left: auto;
    margin-right: 6px;
}

.box.teal {
    background: #1c5568;
    border-color: #333;
}

.type-row {
    display: grid;
    grid-template-columns: repeat(8, 24px);
    justify-content: center;
    height: 26px;
    margin-top: 2px;
    font-family: "Liberation Serif", "DejaVu Serif", serif;
    font-size: 15px;
    font-weight: bold;
    color: #ddd;
}

.type-row button {
    height: 24px;
    white-space: nowrap;
    line-height: 22px;
}

.type-row .on {
    border-radius: 3px;
    background: #383838;
}

.type-row small, .type-row sup, .type-row sub {
    font-size: 10px;
    line-height: 0;
}

.type-row sup {
    vertical-align: 4px;
}

.type-row sub {
    vertical-align: -2px;
}

.type-row b {
    font-family: "DejaVu Serif", serif;
}

.type-row.dim {
    color: #999;
    font-weight: normal;
    font-size: 16px;
}

.over {
    text-decoration: overline;
}

.char-row.last {
    height: 22px;
    margin: 3px 0 0;
}

.char-row .select {
    margin: 0;
    background: none;
    border-color: #5e5e5e;
}

.char-row .select select {
    padding-left: 7px;
    color: #888;
}

.char-row .select svg {
    color: #666;
}

.lang {
    width: 120px;
}

.smooth {
    width: 66px;
}

.aa {
    flex: 1;
    padding-bottom: 3px;
    text-align: center;
    font-family: "Liberation Serif", serif;
    font-size: 14px;
    color: #eee;
}

.aa sub {
    font-size: 14px;
    line-height: 0;
    vertical-align: -3px;
}

/* toolbox */
.toolbox {
    top: 98px;
    left: 25px;
    width: 71px;
    padding-bottom: 3px;
    border-color: #444;
}

.toolbox .float-head {
    height: 14px;
}

.toolbox > .grip {
    margin: 3px auto 9px;
}

.tools {
    display: grid;
    grid-template-columns: 31px 31px;
    gap: 2px;
    padding-left: 2px;
}

.tools button {
    position: relative;
    display: flex;
    align-items: center;
    justify-content: center;
    height: 24px;
    border: 1px solid transparent;
    border-radius: 3px;
}

.tools svg {
    width: 18px;
    height: 18px;
}

.tools .on {
    border-color: #666;
    background: #383838;
}

.sub::after {
    content: "";
    position: absolute;
    right: 2px;
    bottom: 2px;
    border: solid transparent;
    border-width: 0 0 3px 3px;
    border-bottom-color: #bbb;
}

.swatches {
    position: relative;
    height: 57px;
}

.swatches button {
    position: absolute;
    width: 24px;
    height: 24px;
    border: 1px solid #fff;
    outline: 1px solid #333;
}

.swatches .fg {
    top: 9px;
    left: 16px;
    background: #1c5568;
}

.swatches .bg {
    top: 25px;
    left: 31px;
    background: #000c38;
}

.swap, .default {
    position: absolute;
    width: 10px;
    height: 10px;
}

.swap {
    top: 8px;
    left: 47px;
}

.default {
    top: 41px;
    left: 15px;
}

/* gradient editor */
.editor {
    top: 700px;
    left: 1121px;
    width: 457px;
    height: 215px;
    padding: 0 12px 22px 11px;
    border-color: #2b7cc0;
    box-shadow: 0 2px 6px rgba(0, 0, 0, 0.5);
}

.editor-frame {
    height: 100%;
    padding: 88px 7px 8px 9px;
    border: 1px solid #444;
    border-top: 0;
}

.editor fieldset {
    height: 95px;
    margin: 0;
    padding: 9px 0 0 31px;
    border: 1px solid #444;
}

.editor legend {
    margin-left: -12px;
    padding: 0 2px;
}

.stops {
    display: grid;
    grid-template-columns: 56px 50px 12px 59px 43px 21px 77px;
    align-items: center;
    gap: 12px 6px;
}

.stops label {
    text-align: right;
}

.stops > input {
    width: 43px;
    height: 22px;
    padding-left: 4px;
    border: 1px solid #666;
    background: #484848;
}

.stops > button {
    height: 23px;
    border: 1px solid #5c5c5c;
    background: #464646;
    color: #fff;
}

.stops > .off {
    color: #858585;
}

.stops > input.off, .stops > .combo.off, .stops > button.off {
    border-color: #5e5e5e;
    background: #505050;
}

.stops .combo svg {
    border-color: #5e5e5e;
    color: #666;
}

.stops .combo {
    width: 50px;
}

.stop-color {
    display: flex;
    align-items: center;
    gap: 5px;
    margin-left: -3px;
}

.stop-color button {
    width: 44px;
    height: 23px;
    border: 1px solid #333;
    background: #1fa8df;
}

/* color picker */
.picker {
    top: 392px;
    left: 1080px;
    width: 537px;
    height: 403px;
    border-color: #2b7cc0;
    box-shadow: 0 4px 14px rgba(0, 0, 0, 0.5);
}

.picker header {
    display: flex;
    align-items: center;
    justify-content: space-between;
    height: 30px;
    padding: 0 9px 1px 8px;
    background: #fff;
    color: #000;
}

.picker h1 {
    margin: 0;
    font-size: 12px;
    font-weight: normal;
}

.picker-body {
    display: flex;
    padding: 10px 10px 0 10px;
}

.picker-left {
    width: 256px;
    margin: 21px 12px 0 0;
}

.web {
    display: flex;
    align-items: center;
    gap: 9px;
    margin-top: 12px;
}

.picker .hue-wrap {
    height: 256px;
    margin-top: 21px;
}

.picker-right {
    flex: 1;
    margin-left: 12px;
}

.picker-top {
    display: flex;
    height: 158px;
}

.compare {
    width: 61px;
    margin-top: 20px;
    text-align: center;
}

.chips {
    height: 70px;
    border: 1px solid #333;
}

.chips i {
    display: block;
    height: 34px;
    background: #1dace6;
}

.chips i + i {
    background: #1c5568;
}

.websafe {
    margin: 76px 0 0 8px;
}

.websafe button {
    display: block;
    width: 13px;
    height: 13px;
    margin-top: 3px;
    border: 1px solid #fff;
    background: #0099cc;
}

.actions {
    display: flex;
    flex-direction: column;
    gap: 8px;
    width: 106px;
    margin-left: auto;
}

.actions button {
    height: 26px;
    border: 1px solid #747474;
    border-radius: 13px;
    color: #eee;
}

.actions .primary {
    border: 2px solid #bbb;
}

.actions .spaced {
    margin-top: 7px;
}

.values {
    display: flex;
    justify-content: space-between;
    padding-right: 4px;
}

.group {
    display: flex;
    flex-direction: column;
    gap: 5px;
}

.row {
    display: flex;
    align-items: center;
    gap: 6px;
    height: 22px;
}

.row.split {
    margin-top: 4px;
}

.row label {
    width: 20px;
}

.row input[type="text"] {
    width: 35px;
    height: 22px;
    padding-left: 4px;
    border: 1px solid #666;
    background: #454545;
    color: #eee;
}

.row input[type="radio"] {
    appearance: none;
    width: 14px;
    height: 14px;
    border: 1px solid #777;
    border-radius: 50%;
}

.row input[type="radio"]:checked {
    border: 4px solid #ddd;
    background: #222;
}

.row.hex label {
    width: 12px;
    text-align: right;
}

.row.hex input[type="text"] {
    width: 80px;
    padding-left: 4px;
    border: 1px solid #1f5fb8;
    background: linear-gradient(#ddd, #ddd) 3px 3px / 1px 14px no-repeat #454545;
}

.row.lab input[type="text"] {
    width: 43px;
}

.row.cmyk label {
    width: 40px;
    padding-right: 2px;
    text-align: right;
}

/* level meter docked to the screen edge */
.meter {
    position: absolute;
    right: 0;
    top: 899px;
    width: 10px;
    height: 59px;
    padding: 7px 2px 6px 3px;
    border: 1px solid #1c1c30;
    border-right: 0;
    border-radius: 4px 0 0 4px;
    background: #42465a;
}

.meter i {
    display: block;
    height: 100%;
    background: repeating-linear-gradient(transparent 0 1px, #3c4054 1px 2px), linear-gradient(#222838 34%, #e0d060 34%, #90d080 70%, #50d8c0);
}
```
